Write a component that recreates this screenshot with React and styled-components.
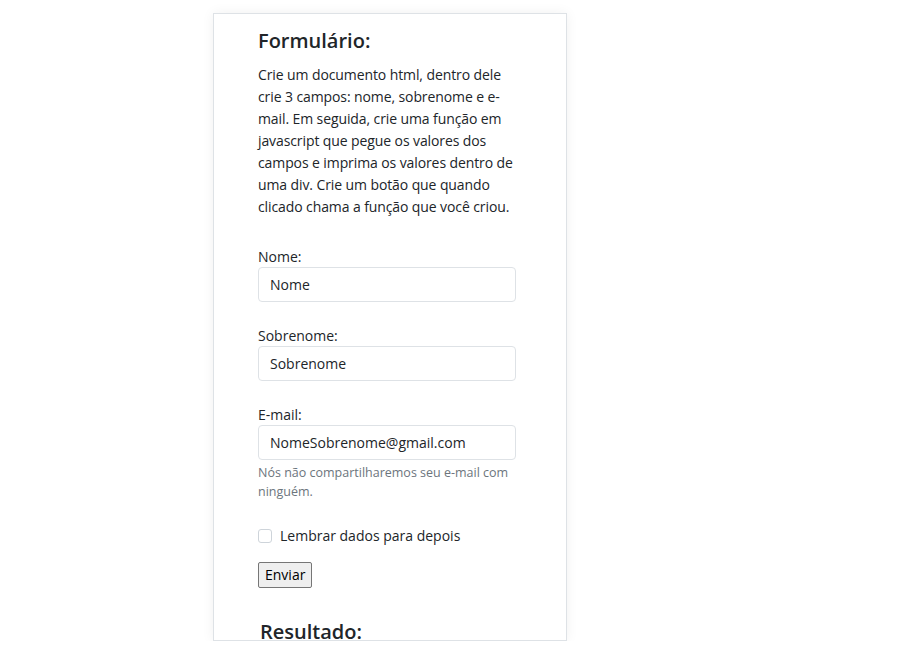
import React from 'react';
import styled, { createGlobalStyle } from 'styled-components';

const GlobalStyle = createGlobalStyle`
  html, body {
    margin: 0;
    padding: 0;
    background: #fff;
  }
  body {
    font-family: "Open Sans", "Noto Sans", sans-serif;
    font-size: 14px;
    line-height: 22px;
    color: #212529;
  }
  * { box-sizing: border-box; }
`;

const Page = styled.div`
  padding: 13px 0 0 213px;
`;

const Card = styled.div`
  width: 354px;
  height: 628px;
  overflow: hidden;
  border: 1px solid #dee2e6;
  box-shadow: 0 0 12px rgba(0, 0, 0, 0.06);
  background: #fff;
  padding: 14px 50px 0 44px;
`;

const Title = styled.h2`
  margin: 0 0 10px;
  font-size: 20px;
  line-height: 26px;
  font-weight: 600;
  padding-left: ${(p) => p.$shift || 0}px;
`;

const Intro = styled.p`
  margin: 0 0 29px;
  letter-spacing: -0.1px;
`;

const Field = styled.div`
  margin-bottom: 24px;
`;

const Label = styled.label`
  display: block;
  line-height: 20px;
`;

const Input = styled.input`
  display: block;
  width: 100%;
  height: 35px;
  padding: 0 11px;
  font: inherit;
  color: #212529;
  border: 1px solid #dee2e6;
  border-radius: 4px;
  background: #fff;
  outline: none;
  &::placeholder { color: #212529; }
`;

const Help = styled.div`
  margin-top: 3px;
  font-size: 12.5px;
  line-height: 19px;
  color: #6c757d;
`;

const Check = styled.label`
  display: flex;
  align-items: center;
  gap: 8px;
  margin-bottom: 15px;
`;

const Box = styled.span`
  width: 14px;
  height: 14px;
  border: 1px solid #ced4da;
  border-radius: 3px;
  background: #fff;
`;

const Button = styled.button`
  display: block;
  height: 26px;
  padding: 0 6px;
  font: inherit;
  color: #000;
  background: #efefef;
  border: 1px solid #767676;
  border-radius: 2px;
  margin-bottom: 31px;
`;

export default function App() {
  return (
    <>
      <GlobalStyle />
      <Page>
        <Card>
          <Title>Formulário:</Title>
          <Intro>
            Crie um documento html, dentro dele crie 3 campos: nome, sobrenome e e-mail. Em seguida, crie uma
            função em javascript que pegue os valores dos campos e imprima os valores dentro de uma div. Crie um
            botão que quando clicado chama a função que você criou.
          </Intro>
          <Field>
            <Label>Nome:</Label>
            <Input placeholder="Nome" />
          </Field>
          <Field>
            <Label>Sobrenome:</Label>
            <Input placeholder="Sobrenome" />
          </Field>
          <Field>
            <Label>E-mail:</Label>
            <Input placeholder="NomeSobrenome@gmail.com" />
            <Help>Nós não compartilharemos seu e-mail com ninguém.</Help>
          </Field>
          <Check>
            <Box />
            Lembrar dados para depois
          </Check>
          <Button>Enviar</Button>
          <Title $shift={2}>Resultado:</Title>
        </Card>
      </Page>
    </>
  );
}
